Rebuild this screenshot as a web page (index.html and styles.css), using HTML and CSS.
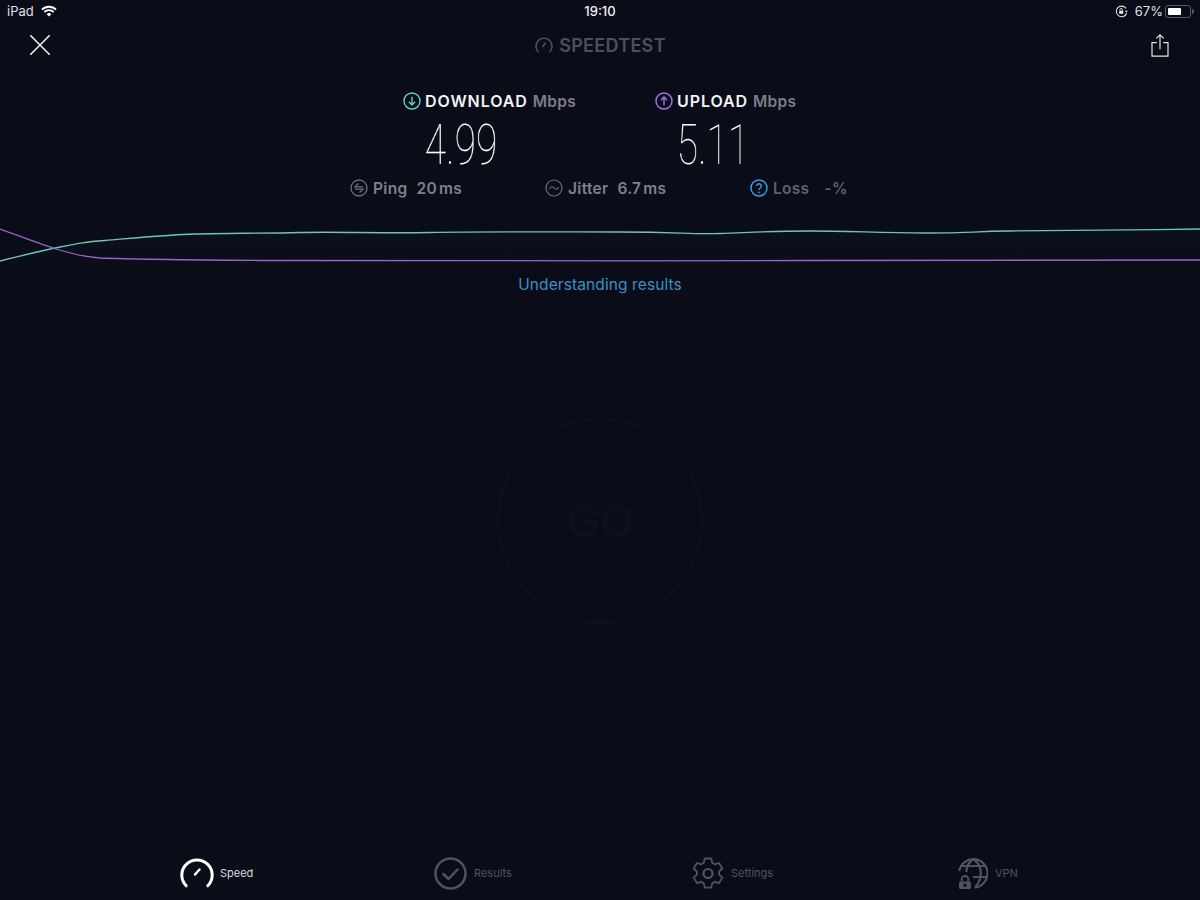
FILE: index.html
```html
<!DOCTYPE html>
<html lang="en">
<head>
  <meta charset="UTF-8" />
  <title>Speedtest</title>
  <link rel="stylesheet" href="styles.css">
</head>
<body>
  <div class="statusbar">
    <div class="status-left">
      <span>iPad</span>
      <svg width="16" height="12" viewBox="0 0 16 12" fill="none" stroke="#fff" stroke-width="1.9">
        <path d="M1 4.6a10 10 0 0 1 14 0"/>
        <path d="M3.4 7a6.6 6.6 0 0 1 9.2 0"/>
        <path d="M8 11.6 5.7 9.2a3.3 3.3 0 0 1 4.6 0z" fill="#fff" stroke="none"/>
      </svg>
    </div>
    <div class="status-time">19:10</div>
    <div class="status-right">
      <svg width="13" height="13" viewBox="0 0 13 13" fill="none" stroke="#e6e6ea" stroke-width="1.1">
        <path d="M11.6 8.2A5.3 5.3 0 1 1 11 3.4"/>
        <path d="M9.8 5.8h3l-1.5 2z" fill="#e6e6ea" stroke="none"/>
        <rect x="4.2" y="5.8" width="4" height="3" fill="#e6e6ea" stroke="none"/>
        <path d="M5 5.8V4.6a1.2 1.2 0 0 1 2.4 0v1.2" stroke-width="0.9"/>
      </svg>
      <span>67%</span>
      <div class="battery"><div class="battery-level"></div></div>
    </div>
  </div>

  <header class="topbar">
    <svg class="close" width="20" height="20" viewBox="0 0 20 20" stroke="#eceef0" stroke-width="1.6" stroke-linecap="round">
      <path d="M0.8 0.8 19.2 19.2M19.2 0.8 0.8 19.2"/>
    </svg>
    <div class="logo">
      <svg width="18" height="16" viewBox="0 0 18 16" fill="none" stroke="#4c4f5d" stroke-width="1.6" stroke-linecap="round">
        <path d="M3 14.6A8 8 0 1 1 15 14.6"/>
        <path d="M7.8 9.4 10.6 6"/>
      </svg>
      <span>SPEEDTEST</span>
    </div>
    <svg class="share" width="18" height="23" viewBox="0 0 18 23" fill="none" stroke="#e4e5e8" stroke-width="1.2">
      <path d="M5.8 8.6H1v13.6h16V8.6h-4.8"/>
      <path d="M9 15.2V1"/>
      <path d="M5.4 4.4 9 .9l3.6 3.5"/>
    </svg>
  </header>

  <section class="results">
    <div class="result">
      <div class="result-head">
        <svg width="18" height="18" viewBox="0 0 18 18" fill="none" stroke="#5fd0c5" stroke-width="1.4">
          <circle cx="9" cy="9" r="8"/>
          <path d="M9 4.8v8M5.9 9.8 9 12.9l3.100-3.100"/>
        </svg>
        <span class="result-name">DOWNLOAD</span>
        <span class="result-unit">Mbps</span>
      </div>
      <div class="result-value">4.99</div>
    </div>
    <div class="result">
      <div class="result-head">
        <svg width="18" height="18" viewBox="0 0 18 18" fill="none" stroke="#a774e6" stroke-width="1.4">
          <circle cx="9" cy="9" r="8"/>
          <path d="M9 13.200v-8M5.900 8.200 9 5.100l3.100 3.100"/>
        </svg>
        <span class="result-name">UPLOAD</span>
        <span class="result-unit">Mbps</span>
      </div>
      <div class="result-value">5.11</div>
    </div>
  </section>

  <section class="metrics">
    <div class="metric metric-ping">
      <svg width="18" height="18" viewBox="0 0 18 18" fill="none" stroke="#6b6e7c" stroke-width="1.300">
        <circle cx="9" cy="9" r="8"/>
        <path d="M8.500 4.500 5 7.900h8M9.500 13.500 13 10.100H5"/>
      </svg>
      <span>Ping</span><span class="metric-value">20<i>ms</i></span>
    </div>
    <div class="metric metric-jitter">
      <svg width="18" height="18" viewBox="0 0 18 18" fill="none" stroke="#6b6e7c" stroke-width="1.200">
        <circle cx="9" cy="9" r="8"/>
        <path d="M4.500 9.800C6 7.200 7.600 7.200 9 9s3 1.800 4.500-.8"/>
      </svg>
      <span>Jitter</span><span class="metric-value">6.7<i>ms</i></span>
    </div>
    <div class="metric metric-loss">
      <svg width="18" height="18" viewBox="0 0 18 18" fill="none" stroke="#3f9fe4" stroke-width="1.400">
        <circle cx="9" cy="9" r="8"/>
        <path d="M6.700 7a2.300 2.300 0 1 1 3.500 2c-.9.500-1.200 1-1.200 2"/>
        <circle cx="9" cy="13.300" r=".9" fill="#3f9fe4" stroke="none"/>
      </svg>
      <span class="dim">Loss</span><span class="metric-value dim">-%</span>
    </div>
  </section>

  <svg class="chart" width="1200" height="60" viewBox="0 215 1200 60" fill="none">
    <defs>
      <linearGradient id="chart-glow" x1="0" y1="0" x2="0" y2="1">
        <stop offset="0" stop-color="#6fc4bb" stop-opacity=".018"/>
        <stop offset="1" stop-color="#6fc4bb" stop-opacity="0"/>
      </linearGradient>
    </defs>
    <path d="M0 261C20 256 40 251 60 247S85 242 105 240.500C135 238 165 235 195 234S260 233.500 300 232.500 380 233.500 430 232.500 560 232 620 232 690 234.500 720 233.500 770 231 810 231 880 233 925 233 970 231.500 1010 231 1130 230 1200 229V275H0z" fill="url(#chart-glow)"/>
    <path d="M0 261C20 256 40 251 60 247S85 242 105 240.500C135 238 165 235 195 234S260 233.500 300 232.500 380 233.500 430 232.500 560 232 620 232 690 234.500 720 233.500 770 231 810 231 880 233 925 233 970 231.500 1010 231 1130 230 1200 229" stroke="#6cc5bc" stroke-width="1.300"/>
    <path d="M0 229C20 236 40 244 58 249.500S85 257 100 258C140 259.500 200 260 260 260.500S600 261 800 260.500 1100 260 1200 260" stroke="#9b62cf" stroke-width="1.300"/>
  </svg>

  <a class="understanding" href="#">Understanding results</a>

  <main class="go-area">
    <div class="go-button">GO</div>
  </main>

  <nav class="tabs">
    <a class="tab tab-active" href="#">
      <svg width="34" height="30" viewBox="0 0 34 30" fill="none" stroke="#fff" stroke-width="3" stroke-linecap="round">
        <path d="M6.200 27.800A15.200 15.200 0 1 1 27.800 27.800"/>
        <path d="M15 16.500 19.500 11.500" stroke-width="2.400"/>
      </svg>
      <span>Speed</span>
    </a>
    <a class="tab" href="#">
      <svg width="33" height="33" viewBox="0 0 33 33" fill="none" stroke="#4f5263" stroke-width="2.500" stroke-linecap="round" stroke-linejoin="round">
        <circle cx="16.500" cy="16.500" r="15"/>
        <path d="M9.500 17 14.500 22 23.500 12.500"/>
      </svg>
      <span>Results</span>
    </a>
    <a class="tab" href="#">
      <svg width="32" height="33" viewBox="0 0 32 33" fill="none" stroke="#4f5263" stroke-width="1.800" stroke-linejoin="round">
        <path d="M12.800 1.500h6.400l1 4.300 2.700 1.500 4.200-1.300 3.200 5.500-3.200 3 0 3.100 3.200 3-3.200 5.500-4.200-1.300-2.700 1.500-1 4.300h-6.400l-1-4.300-2.700-1.500-4.200 1.300-3.200-5.500 3.200-3 0-3.100-3.200-3 3.200-5.500 4.200 1.300 2.700-1.500z"/>
        <circle cx="16" cy="16.500" r="4.500" stroke-width="2.200"/>
      </svg>
      <span>Settings</span>
    </a>
    <a class="tab" href="#">
      <svg width="30" height="33" viewBox="0 0 30 33" fill="none" stroke="#4f5263" stroke-width="2.200">
        <path d="M1.300 14A14.200 14.200 0 1 1 16.500 30.500"/>
        <path d="M3 9h24.500M15 20h14"/>
        <path d="M15 2C11 5 8.500 10 8.300 15M15 2C20.500 5.500 23 11 22.800 17 22.600 23 20 27 17.500 29.500"/>
        <rect x="1" y="24.500" width="12" height="7.500" rx="1.500" fill="#4f5263" stroke="none"/>
        <rect x="5.500" y="26.800" width="3" height="3" fill="#0a0d18" stroke="none"/>
        <path d="M3.700 24.500v-2.200a3.300 3.300 0 0 1 6.600 0v2.200" stroke-width="2"/>
      </svg>
      <span>VPN</span>
    </a>
  </nav>
</body>
</html>
```

FILE: styles.css
```css
* {
  margin: 0;
  padding: 0;
  box-sizing: border-box;
}

html, body {
  height: 100%;
}

body {
  width: 1200px;
  height: 900px;
  overflow: hidden;
  display: flex;
  flex-direction: column;
  background: #0a0d18;
  color: #fff;
  font-family: "Inter", "Liberation Sans", sans-serif;
}

a {
  text-decoration: none;
}

/* status bar */
.statusbar {
  height: 22px;
  padding: 0 7px;
  display: grid;
  grid-template-columns: 1fr auto 1fr;
  align-items: center;
  font-size: 13px;
  color: #dfe0e4;
}

.status-left {
  display: flex;
  align-items: center;
  gap: 7px;
}

.status-time {
  color: #f2f2f4;
  font-weight: 500;
}

.status-right {
  display: flex;
  justify-content: flex-end;
  align-items: center;
  gap: 2px;
}

.status-right svg {
  margin-right: 5px;
}

.battery {
  position: relative;
  width: 26px;
  height: 13px;
  margin-right: 2px;
  padding: 2px;
  border: 1px solid #55576a;
  border-radius: 3px;
}

.battery::after {
  content: "";
  position: absolute;
  right: -4px;
  top: 3px;
  width: 2px;
  height: 5px;
  background: #55576a;
  border-radius: 0 2px 2px 0;
}

.battery-level {
  width: 67%;
  height: 100%;
  background: #fff;
  border-radius: 1px;
}

/* header */
.topbar {
  height: 46px;
  padding: 0 31px 0 30px;
  display: flex;
  align-items: center;
  justify-content: space-between;
}

.logo {
  display: flex;
  align-items: center;
  gap: 6px;
  color: #4c4f5d;
  font-size: 18px;
  font-weight: 600;
  letter-spacing: .3px;
}

/* download / upload */
.results {
  margin-top: 22px;
  padding-left: 403px;
  display: grid;
  grid-template-columns: 252px auto;
  justify-content: start;
}

.result-head {
  height: 22px;
  display: flex;
  align-items: center;
  font-size: 15.500px;
  font-weight: 600;
  letter-spacing: .3px;
}

.result-name {
  margin-left: 4px;
  color: #f2f3f5;
  font-size: 16px;
  letter-spacing: .9px;
}

.result-unit {
  margin-left: 5px;
  color: #7a7d8b;
}

.result-value {
  width: 116px;
  margin-top: 11px;
  font-family: "Roboto", "Liberation Sans", sans-serif;
  font-size: 56px;
  font-weight: 100;
  line-height: 44px;
  text-align: center;
  transform: scaleX(.7);
  will-change: transform;
}

/* ping / jitter / loss */
.metrics {
  margin-top: 9px;
  padding-left: 350px;
  display: grid;
  grid-template-columns: 195px 205px auto;
  justify-content: start;
}

.metric {
  height: 24px;
  display: flex;
  align-items: center;
  font-size: 15.500px;
  font-weight: 600;
  letter-spacing: .3px;
  color: #7d808e;
}

.metric svg {
  margin-right: 5px;
}

.metric-value {
  margin-left: 9px;
}

.metric-loss .metric-value {
  margin-left: 15px;
}

.metric i {
  font-style: normal;
  margin-left: 2px;
}

.dim {
  color: #5f6271;
}

/* graph */
.chart {
  display: block;
  margin-top: 15px;
  flex: none;
}

.understanding {
  display: block;
  height: 20px;
  line-height: 20px;
  text-align: center;
  color: #3d8fc6;
  font-size: 15.500px;
  letter-spacing: .1px;
}

/* start button */
.go-area {
  flex: 1;
  display: flex;
  justify-content: center;
  padding-top: 123px;
}

.go-button {
  width: 206px;
  height: 206px;
  border: 2px solid #0f121d;
  border-radius: 50%;
  display: flex;
  align-items: center;
  justify-content: center;
  color: #0e111c;
  font-size: 44px;
  font-weight: 700;
}

/* bottom tabs */
.tabs {
  height: 54px;
  padding-left: 180px;
  display: grid;
  grid-template-columns: 254px 258px 266px auto;
  align-items: center;
}

.tab {
  display: flex;
  align-items: center;
  gap: 7px;
  color: #4f5263;
  font-size: 11px;
}

.tab-active {
  color: #d8d9de;
  gap: 6px;
}
```
